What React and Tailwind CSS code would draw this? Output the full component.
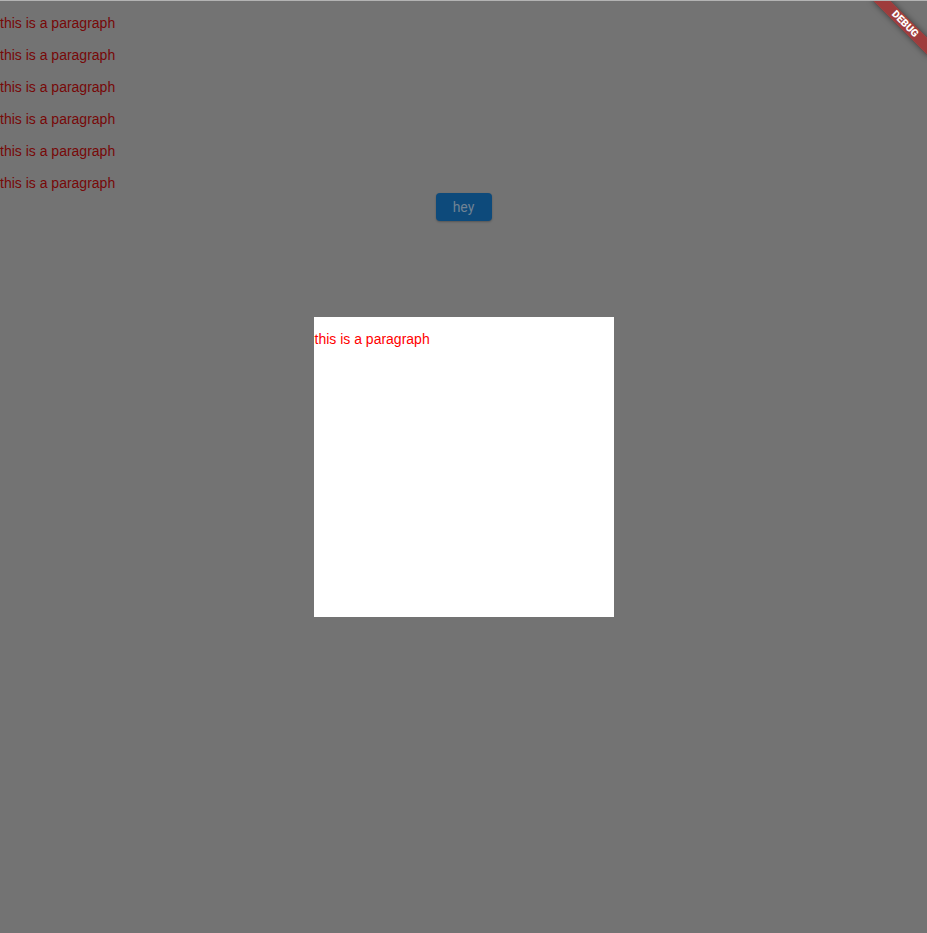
import React from 'react';

const paragraphs = Array.from({ length: 6 }, () => 'this is a paragraph');

const DebugBanner = () => (
  <div className="pointer-events-none absolute inset-0 overflow-hidden">
    <div className="absolute right-[-18px] top-[16.5px] w-[80px] h-[12px] rotate-45 bg-[rgba(183,28,28,0.63)] shadow-[0_0_6px_rgba(0,0,0,0.5)] flex items-center justify-center">
      <span className="text-white text-[10.2px] leading-none font-black font-['Roboto',sans-serif]">DEBUG</span>
    </div>
  </div>
);

const App = () => {
  return (
    <div className="relative w-full h-[933px] overflow-hidden bg-[#737373] border-t border-[#b3b3b3] font-['Liberation_Sans',Arial,sans-serif]">
      {/* Page content (dimmed by the modal barrier) */}
      <div className="flex flex-col pt-[13px]">
        <div className="flex flex-col gap-[14px]">
          {paragraphs.map((text, i) => (
            <p key={i} className="m-0 text-[14px] leading-[18px] text-[#770808]">{text}</p>
          ))}
        </div>
        <button className="self-center mt-px w-[56px] h-[28px] rounded-[4px] bg-[#0d4a7b] shadow-[0_1px_2px_rgba(0,0,0,0.25)] text-[14px] text-[#708394] font-['Roboto',sans-serif]">
          hey
        </button>
      </div>

      {/* Dialog */}
      <div className="absolute inset-0 flex items-center justify-center">
        <div className="w-[300px] h-[300px] bg-white pt-[13px] pl-px">
          <p className="m-0 text-[14px] leading-[18px] text-[#ff0000]">this is a paragraph</p>
        </div>
      </div>

      <DebugBanner />
    </div>
  );
};

export default App;
